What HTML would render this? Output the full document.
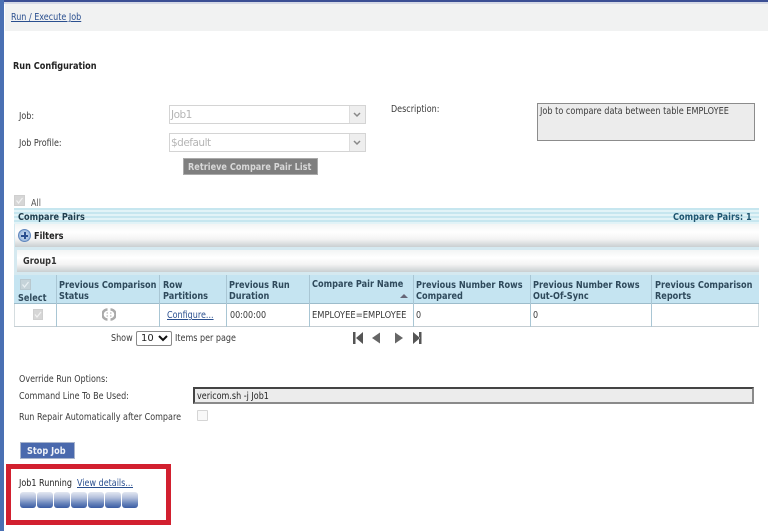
<!DOCTYPE html>
<html><head><meta charset="utf-8">
<style>
html,body{margin:0;padding:0;background:#fff;}
#p{position:relative;width:768px;height:531px;overflow:hidden;background:#fff;font-family:"DejaVu Sans","Liberation Sans",sans-serif;font-size:9.5px;color:#3a3a3a;filter:blur(.35px);}
#p div,#p span.a,#p a.a{position:absolute;white-space:nowrap;box-sizing:border-box;}
.t{line-height:12px;transform-origin:0 0;transform:scaleX(.845);margin-top:1px;}
.h{transform:scaleX(.86);}
.b{font-weight:bold;color:#2f4a5c;}
a{color:#2a4f8f;text-decoration:underline;}
.sel{background:#fff;border:1px solid #d4d4d4;color:#b5b5b5;padding:0 0 0 1px;line-height:19px;font-size:10.5px;letter-spacing:-.5px;}
.arr{position:absolute;right:0;top:0;width:15px;height:100%;background:#eee;border-left:1px solid #ddd;}
.cb{background:#d6d6d6;border:1px solid #cfcfcf;}
.v{width:1px;background:#a9c6d4;}
.seg{top:492px;width:16px;height:16px;border-radius:3px;background:linear-gradient(#e3e7f1 0%,#b4c0dc 35%,#6a86bc 70%,#3a5ca3 100%);}
</style></head><body>
<div id="p">
<div style="left:0;top:0;width:768px;height:2px;background:#3b4f94"></div>
<div style="left:0;top:2px;width:768px;height:2px;background:#d5d9e6"></div>
<div style="left:0;top:0;width:4px;height:531px;background:#4a70b3"></div>
<div style="left:5px;top:4px;width:763px;height:27px;background:#f1f2f2"></div>
<a class="a t" href="#" style="left:11px;top:11px;">Run / Execute Job</a>
<div class="t h" style="left:13px;top:60px;font-weight:bold;color:#222;">Run Configuration</div>

<div class="t" style="left:19px;top:110px;">Job:</div>
<div class="t" style="left:19px;top:137px;">Job Profile:</div>
<div class="sel" style="left:169px;top:105px;width:197px;height:19px;">Job1<span class="arr"><svg width="14" height="18"><path d="M4 7l3 3 3-3" fill="none" stroke="#888" stroke-width="1.5"/></svg></span></div>
<div class="sel" style="left:169px;top:133px;width:197px;height:19px;">$default<span class="arr"><svg width="14" height="18"><path d="M4 7l3 3 3-3" fill="none" stroke="#888" stroke-width="1.5"/></svg></span></div>
<div style="left:183px;top:158px;width:135px;height:17px;background:#7f7f7f;border:1px solid #aaa;"></div>
<div class="t h" style="left:188px;top:161px;font-weight:bold;color:#d8d8d8;">Retrieve Compare Pair List</div>

<div class="t" style="left:391px;top:103px;">Description:</div>
<div style="left:537px;top:103px;width:218px;height:38px;background:#ececec;border:1px solid #8c8c8c;"></div>
<div class="t" style="left:540px;top:105px;transform:scaleX(.858);">Job to compare data between table EMPLOYEE</div>

<div class="cb" style="left:14px;top:195px;width:11px;height:11px;"><svg style="position:absolute;left:0;top:0" width="9" height="9"><path d="M1.500 4.500l2 2.500 4-5" fill="none" stroke="#f2f2f2" stroke-width="1.200"/></svg></div>
<div class="t" style="left:31px;top:197px;color:#555;">All</div>

<div style="left:14px;top:208px;width:745px;height:16px;background:repeating-linear-gradient(#c6e6ef 0,#c6e6ef 2px,#e2f3f7 2px,#e2f3f7 4px);"></div>
<div class="t h b" style="left:18px;top:211px;color:#1f3d4d;">Compare Pairs</div>
<div class="t h b" style="left:673px;top:211px;color:#1f5570;">Compare Pairs: 1</div>

<div style="left:14px;top:224px;width:745px;height:51px;background:#d5e9f0;"></div>
<div style="left:15px;top:224px;width:744px;height:23px;background:linear-gradient(#f2f4f4 0%,#fff 35%,#f4f4f4 65%,#c9cfd1 100%);"></div>
<div style="left:17px;top:250px;width:742px;height:22px;background:linear-gradient(#f2f4f4 0%,#fff 35%,#f4f4f4 65%,#c9cfd1 100%);"></div>
<div style="left:18px;top:229px;width:13px;height:13px;border-radius:50%;background:radial-gradient(#dbe8f5,#7ea3d2);border:1px solid #5f86bd;"></div>
<div style="left:21px;top:235px;width:7px;height:1.500px;background:#2a4f8f;"></div>
<div style="left:24px;top:232px;width:1.500px;height:7px;background:#2a4f8f;"></div>
<div class="t h" style="left:34px;top:230px;font-weight:bold;color:#222;">Filters</div>
<div class="t h" style="left:23px;top:255px;font-weight:bold;color:#333;">Group1</div>

<div style="left:14px;top:275px;width:745px;height:28px;background:#c5e4f1;"></div>
<div style="left:14px;top:303px;width:745px;height:1px;background:#9dbccb;"></div>
<div style="left:14px;top:326px;width:745px;height:1px;background:#c4cdd2;"></div>
<div style="left:14px;top:304px;width:1px;height:22px;background:#d5dde0;"></div>
<div style="left:758px;top:304px;width:1px;height:22px;background:#d5dde0;"></div>
<div class="v" style="left:56px;top:275px;height:52px;"></div>
<div class="v" style="left:159px;top:275px;height:52px;"></div>
<div class="v" style="left:226px;top:275px;height:52px;"></div>
<div class="v" style="left:309px;top:275px;height:52px;"></div>
<div class="v" style="left:413px;top:275px;height:52px;"></div>
<div class="v" style="left:530px;top:275px;height:52px;"></div>
<div class="v" style="left:651px;top:275px;height:52px;"></div>

<div class="cb" style="left:20px;top:279px;width:11px;height:11px;background:#c5d3d9;border-color:#b8c8cf;"><svg style="position:absolute;left:0;top:0" width="9" height="9"><path d="M1.500 4.500l2 2.500 4-5" fill="none" stroke="#e8f0f3" stroke-width="1.200"/></svg></div>
<div class="t h b" style="left:18px;top:292px;">Select</div>
<div class="t h b" style="left:59px;top:279px;">Previous Comparison</div>
<div class="t h b" style="left:59px;top:290px;">Status</div>
<div class="t h b" style="left:163px;top:279px;">Row</div>
<div class="t h b" style="left:163px;top:290px;">Partitions</div>
<div class="t h b" style="left:229px;top:279px;">Previous Run</div>
<div class="t h b" style="left:229px;top:290px;">Duration</div>
<div class="t h b" style="left:312px;top:278px;">Compare Pair Name</div>
<svg style="position:absolute;left:400px;top:293px" width="8" height="5"><path d="M0 5L4 1 8 5z" fill="#667"/></svg>
<div class="t h b" style="left:416px;top:279px;">Previous Number Rows</div>
<div class="t h b" style="left:416px;top:290px;">Compared</div>
<div class="t h b" style="left:533px;top:279px;">Previous Number Rows</div>
<div class="t h b" style="left:533px;top:290px;">Out-Of-Sync</div>
<div class="t h b" style="left:655px;top:279px;">Previous Comparison</div>
<div class="t h b" style="left:655px;top:290px;">Reports</div>

<div class="cb" style="left:33px;top:309px;width:10px;height:11px;"><svg style="position:absolute;left:0;top:0" width="8" height="9"><path d="M1 4.500l2 2.500 4-5" fill="none" stroke="#f2f2f2" stroke-width="1.200"/></svg></div>
<svg style="position:absolute;left:102px;top:307px" width="14" height="15"><path d="M5.500 2.500A5 5 0 0 0 5.500 12.500M8.500 2.500A5 5 0 0 1 8.500 12.500" fill="none" stroke="#aaa" stroke-width="2.500"/><path d="M4.500 6h1.500M4.500 9h1.500M8 6h1.500M8 9h1.500" stroke="#aaa"/></svg>
<a class="a t" href="#" style="left:167px;top:309px;">Configure...</a>
<div class="t" style="left:230px;top:309px;">00:00:00</div>
<div class="t" style="left:312px;top:309px;transform:scaleX(.88);">EMPLOYEE=EMPLOYEE</div>
<div class="t" style="left:416px;top:309px;">0</div>
<div class="t" style="left:533px;top:309px;">0</div>

<div class="t" style="left:111px;top:332px;">Show</div>
<div style="left:136px;top:331px;width:36px;height:15px;border:1px solid #8a8a8a;border-radius:2px;background:#fff;color:#222;font-size:10px;line-height:13px;padding-left:4px;">10<svg style="position:absolute;right:3px;top:3px" width="10" height="7"><path d="M1 1l4 4 4-4" fill="none" stroke="#111" stroke-width="2"/></svg></div>
<div class="t" style="left:175px;top:332px;">Items per page</div>
<svg style="position:absolute;left:350px;top:330px" width="75" height="16">
<path d="M3 2h2.500v12H3zM13 2v12L6 8z" fill="#555"/>
<path d="M30 2.500v11L22 8z" fill="#666"/>
<path d="M45 2.500v11L53 8z" fill="#666"/>
<path d="M63 2v12l7-6zM69 2h2.500v12H69z" fill="#555"/>
</svg>

<div class="t" style="left:19px;top:373px;">Override Run Options:</div>
<div class="t" style="left:19px;top:390px;">Command Line To Be Used:</div>
<div style="left:193px;top:387px;width:561px;height:17px;background:#ececec;border:2px solid #8a8a8a;border-top-color:#444;border-left-color:#444;"></div>
<div class="t" style="left:197px;top:390px;color:#222;">vericom.sh -j Job1</div>
<div class="t" style="left:19px;top:411px;">Run Repair Automatically after Compare</div>
<div style="left:197px;top:410px;width:11px;height:11px;border:1px solid #d5d5d5;background:#f8f8f8;border-radius:1px;"></div>

<div style="left:20px;top:442px;width:55px;height:17px;background:#4a69ad;border:1px solid #a8b4cc;"></div>
<div class="t h" style="left:27px;top:445px;font-weight:bold;color:#eef1f8;">Stop Job</div>

<div style="left:6px;top:464px;width:165px;height:61px;border:5px solid #d2202f;"></div>
<div class="t" style="left:19px;top:477px;color:#222;">Job1 Running</div>
<a class="a t" href="#" style="left:77px;top:477px;">View details...</a>
<div class="seg" style="left:20px;"></div>
<div class="seg" style="left:37px;"></div>
<div class="seg" style="left:54px;"></div>
<div class="seg" style="left:71px;"></div>
<div class="seg" style="left:88px;"></div>
<div class="seg" style="left:105px;"></div>
<div class="seg" style="left:122px;"></div>
</div>
</body></html>
